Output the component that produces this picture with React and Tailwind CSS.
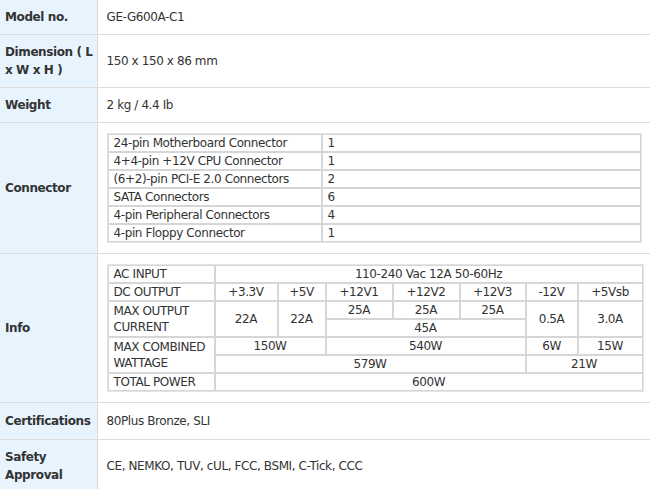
import React from "react";

const connectors = [
  ["24-pin Motherboard Connector", "1"],
  ["4+4-pin +12V CPU Connector", "1"],
  ["(6+2)-pin PCI-E 2.0 Connectors", "2"],
  ["SATA Connectors", "6"],
  ["4-pin Peripheral Connectors", "4"],
  ["4-pin Floppy Connector", "1"],
];

const cell = "border border-[#d6d6d6] px-[5px] h-[18px] leading-[16px] p-0";
const num = `${cell} text-center`;

function ConnectorTable() {
  return (
    <table className="my-[2px] w-[535px] table-fixed border-separate border-spacing-0 border border-[#e4e4e4]">
      <colgroup>
        <col className="w-[214px]" />
        <col />
      </colgroup>
      <tbody>
        {connectors.map(([name, qty]) => (
          <tr key={name}>
            <td className={`${cell} whitespace-nowrap`}>{name}</td>
            <td className={cell}>{qty}</td>
          </tr>
        ))}
      </tbody>
    </table>
  );
}

function InfoTable() {
  return (
    <table className="my-[2px] w-[535px] table-fixed border-separate border-spacing-0 border border-[#e4e4e4]">
      <colgroup>
        <col className="w-[107px]" />
        <col className="w-[63px]" />
        <col className="w-[48px]" />
        <col className="w-[67px]" />
        <col className="w-[67px]" />
        <col className="w-[66px]" />
        <col className="w-[52px]" />
        <col className="w-[65px]" />
      </colgroup>
      <tbody>
        <tr>
          <td className={cell}>AC INPUT</td>
          <td className={num} colSpan={7}>110-240 Vac 12A 50-60Hz</td>
        </tr>
        <tr>
          <td className={cell}>DC OUTPUT</td>
          <td className={num}>+3.3V</td>
          <td className={num}>+5V</td>
          <td className={num}>+12V1</td>
          <td className={num}>+12V2</td>
          <td className={num}>+12V3</td>
          <td className={num}>-12V</td>
          <td className={num}>+5Vsb</td>
        </tr>
        <tr>
          <td className={cell} rowSpan={2}>MAX OUTPUT CURRENT</td>
          <td className={num} rowSpan={2}>22A</td>
          <td className={num} rowSpan={2}>22A</td>
          <td className={num}>25A</td>
          <td className={num}>25A</td>
          <td className={num}>25A</td>
          <td className={num} rowSpan={2}>0.5A</td>
          <td className={num} rowSpan={2}>3.0A</td>
        </tr>
        <tr>
          <td className={num} colSpan={3}>45A</td>
        </tr>
        <tr>
          <td className={cell} rowSpan={2}>MAX COMBINED WATTAGE</td>
          <td className={num} colSpan={2}>150W</td>
          <td className={num} colSpan={3}>540W</td>
          <td className={num}>6W</td>
          <td className={num}>15W</td>
        </tr>
        <tr>
          <td className={num} colSpan={5}>579W</td>
          <td className={num} colSpan={2}>21W</td>
        </tr>
        <tr>
          <td className={cell}>TOTAL POWER</td>
          <td className={num} colSpan={7}>600W</td>
        </tr>
      </tbody>
    </table>
  );
}

const rows = [
  { label: "Model no.", value: "GE-G600A-C1" },
  { label: "Dimension ( L x W x H )", value: "150 x 150 x 86 mm" },
  { label: "Weight", value: "2 kg / 4.4 Ib" },
  { label: "Connector", value: <ConnectorTable /> },
  { label: "Info", value: <InfoTable /> },
  { label: "Certifications", value: "80Plus Bronze, SLI", extra: "py-[9px]" },
  { label: "Safety Approval", value: "CE, NEMKO, TUV, cUL, FCC, BSMI, C-Tick, CCC" },
];

export default function App() {
  return (
    <div className="w-[650px] h-[489px] overflow-hidden bg-white text-[#333] font-['DejaVu_Sans',Verdana,sans-serif] text-[12px] leading-[18px] tracking-[-0.4px]">
      <table className="w-[650px] table-fixed border-collapse">
        <colgroup>
          <col className="w-[97px]" />
          <col />
        </colgroup>
        <tbody>
          {rows.map((r) => (
            <tr key={r.label} className="border-b border-[#dcdcdc]">
              <td className={`bg-[#e8f4fd] border-r border-[#dcdcdc] pl-[5px] pr-[2px] font-bold align-middle ${r.extra || "py-2"}`}>
                {r.label}
              </td>
              <td className={`pl-[9px] align-middle ${r.extra || "py-2"}`}>{r.value}</td>
            </tr>
          ))}
        </tbody>
      </table>
    </div>
  );
}
